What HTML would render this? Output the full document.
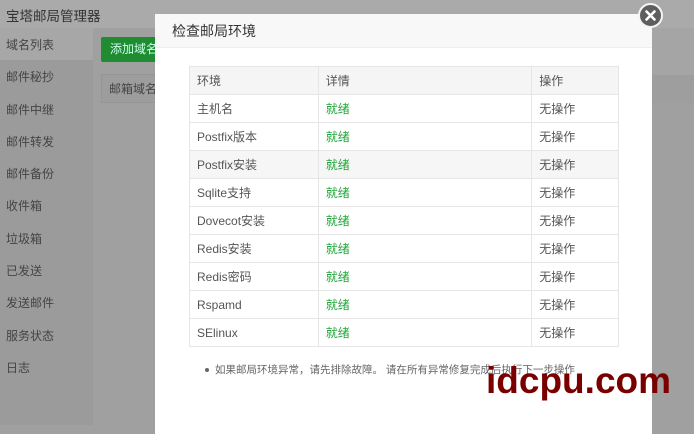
<!DOCTYPE html>
<html><head><meta charset="utf-8">
<style>
*{margin:0;padding:0;box-sizing:border-box}
body{width:694px;height:425px;overflow:hidden;position:relative;background:#a0a0a0;font-family:"Liberation Sans","Noto Sans CJK SC",sans-serif;font-size:12px;color:#555}
.top{position:absolute;left:0;top:0;width:694px;height:28px;background:#aaa;color:#333;font-size:13.5px;padding:5px 6px}
.side{position:absolute;left:0;top:28px;width:93px;height:397px;background:#9b9b9b}
.side div{height:32.3px;line-height:34px;padding-left:6px;color:#444;font-size:12px}
.side div.act{background:#a7a7a7}
.btn{position:absolute;left:101px;top:37px;width:60px;height:25px;background:#1f8c31;color:#cfe;border-radius:2px;line-height:25px;padding-left:9px}
.th0{position:absolute;left:101px;top:74px;width:60px;height:29px;background:#9d9d9d;border:1px solid #959595;color:#444;line-height:28px;padding-left:7px}
.right{position:absolute;left:652px;top:28px;width:42px;height:47px;background:#a5a5a5}
.right2{position:absolute;left:652px;top:75px;width:42px;height:28px;background:#9e9e9e}
.modal{position:absolute;left:155px;top:14px;width:497px;height:420px;background:#fff}
.mh{height:34px;background:#f8f8f8;border-bottom:1px solid #eee;color:#333;font-size:14px;line-height:34px;padding-left:17px}
table{position:absolute;left:34px;top:52px;width:430px;border-collapse:collapse}
td{border:1px solid #e6e6e6;height:28px;padding-left:7px;color:#555;font-size:12px}
tr.h td{background:#f5f5f5}
tr.g td{background:#f6f6f6}
.ok{color:#20a53a}
.note{position:absolute;left:50px;top:348px;color:#666;font-size:10.5px}
.note:before{content:"";display:inline-block;width:4px;height:4px;background:#666;border-radius:50%;margin-right:6px;vertical-align:middle}
.close{position:absolute;left:638px;top:3px;width:25px;height:25px;border-radius:50%;background:#5e5e5e;border:2px solid #f4f4f4}
.wm{position:absolute;left:486px;top:361px;font-size:37px;line-height:40px;font-weight:bold;color:#7a0000;font-family:"Liberation Sans",sans-serif}
</style></head><body>
<div class="top">宝塔邮局管理器</div>
<div class="side">
<div class="act">域名列表</div><div>邮件秘抄</div><div>邮件中继</div><div>邮件转发</div><div>邮件备份</div><div>收件箱</div><div>垃圾箱</div><div>已发送</div><div>发送邮件</div><div>服务状态</div><div>日志</div>
</div>
<div class="btn">添加域名</div>
<div class="th0">邮箱域名</div>
<div class="right"></div><div class="right2"></div>
<div class="modal">
<div class="mh">检查邮局环境</div>
<table>
<colgroup><col style="width:129px"><col style="width:214px"><col style="width:87px"></colgroup>
<tr class="h"><td>环境</td><td>详情</td><td>操作</td></tr>
<tr><td>主机名</td><td class="ok">就绪</td><td>无操作</td></tr>
<tr><td>Postfix版本</td><td class="ok">就绪</td><td>无操作</td></tr>
<tr class="g"><td>Postfix安装</td><td class="ok">就绪</td><td>无操作</td></tr>
<tr><td>Sqlite支持</td><td class="ok">就绪</td><td>无操作</td></tr>
<tr><td>Dovecot安装</td><td class="ok">就绪</td><td>无操作</td></tr>
<tr><td>Redis安装</td><td class="ok">就绪</td><td>无操作</td></tr>
<tr><td>Redis密码</td><td class="ok">就绪</td><td>无操作</td></tr>
<tr><td>Rspamd</td><td class="ok">就绪</td><td>无操作</td></tr>
<tr><td>SElinux</td><td class="ok">就绪</td><td>无操作</td></tr>
</table>
<div class="note">如果邮局环境异常，请先排除故障。 请在所有异常修复完成后执行下一步操作</div>
</div>
<div class="close"><svg width="21" height="21" viewBox="0 0 21 21"><path d="M6.5 6.5L14.5 14.5M14.5 6.5L6.5 14.5" stroke="#fff" stroke-width="2.6" stroke-linecap="round"/></svg></div>
<div class="wm">idcpu.com</div>
</body></html>
